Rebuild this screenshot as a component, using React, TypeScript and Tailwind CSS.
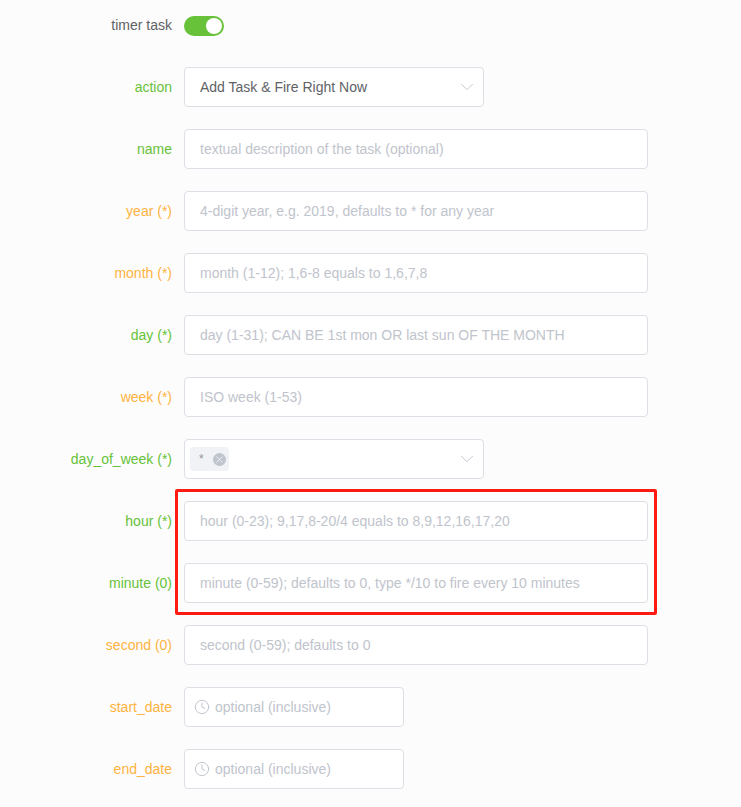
import { ChevronDown, Clock, X } from "lucide-react";
import type { ReactNode } from "react";

const GREEN = "text-[#67c23a]";
const ORANGE = "text-[#ffb340]";

function Row({ label, color, children }: { label: string; color: string; children: ReactNode }) {
  return (
    <div className="flex items-center h-10 mb-[22px]">
      <label className={`w-[172px] pr-0 text-right leading-10 shrink-0 ${color}`}>{label}</label>
      <div className="ml-3 flex items-center">{children}</div>
    </div>
  );
}

function TextInput({ placeholder }: { placeholder: string }) {
  return (
    <input
      readOnly
      placeholder={placeholder}
      className="w-[464px] h-10 px-[15px] bg-white border border-[#dcdfe6] rounded text-sm outline-none placeholder:text-[#c0c4cc]"
    />
  );
}

function DateInput() {
  return (
    <div className="w-[220px] h-10 flex items-center pl-[9px] bg-white border border-[#dcdfe6] rounded">
      <Clock size={16} strokeWidth={1.5} className="text-[#c0c4cc]" />
      <span className="ml-[5px] text-[#c0c4cc]">optional (inclusive)</span>
    </div>
  );
}

export default function App() {
  return (
    <div className="relative w-[741px] h-[807px] overflow-hidden bg-[#fcfcfc] pt-[5px] text-sm font-['Liberation_Sans',Arial,sans-serif]">
      <Row label="timer task" color="text-[#606266]">
        <div className="mt-0.5 w-10 h-5 rounded-full bg-[#67c23a] flex items-center justify-end pr-0.5">
          <div className="w-4 h-4 rounded-full bg-white" />
        </div>
      </Row>

      <Row label="action" color={GREEN}>
        <div className="w-[300px] h-10 flex items-center justify-between pl-[15px] pr-[5px] bg-white border border-[#dcdfe6] rounded text-[#606266]">
          <span>Add Task &amp; Fire Right Now</span>
          <ChevronDown size={22} strokeWidth={1} className="text-[#c0c4cc]" />
        </div>
      </Row>
      <Row label="name" color={GREEN}>
        <TextInput placeholder="textual description of the task (optional)" />
      </Row>
      <Row label="year (*)" color={ORANGE}>
        <TextInput placeholder="4-digit year, e.g. 2019, defaults to * for any year" />
      </Row>
      <Row label="month (*)" color={ORANGE}>
        <TextInput placeholder="month (1-12); 1,6-8 equals to 1,6,7,8" />
      </Row>
      <Row label="day (*)" color={GREEN}>
        <TextInput placeholder="day (1-31); CAN BE 1st mon OR last sun OF THE MONTH" />
      </Row>
      <Row label="week (*)" color={ORANGE}>
        <TextInput placeholder="ISO week (1-53)" />
      </Row>
      <Row label="day_of_week (*)" color={GREEN}>
        <div className="w-[300px] h-10 flex items-center justify-between pl-[5px] pr-[5px] bg-white border border-[#dcdfe6] rounded">
          <div className="h-6 w-[39px] flex items-center bg-[#f0f2f5] rounded pl-[9px] text-xs text-[#909399]">
            <span>*</span>
            <span className="ml-[9px] w-[13px] h-[13px] rounded-full bg-[#c0c4cc] flex items-center justify-center">
              <X size={11} strokeWidth={2} className="text-[#f0f2f5]" />
            </span>
          </div>
          <ChevronDown size={22} strokeWidth={1} className="text-[#c0c4cc]" />
        </div>
      </Row>
      <Row label="hour (*)" color={GREEN}>
        <TextInput placeholder="hour (0-23); 9,17,8-20/4 equals to 8,9,12,16,17,20" />
      </Row>
      <Row label="minute (0)" color={GREEN}>
        <TextInput placeholder="minute (0-59); defaults to 0, type */10 to fire every 10 minutes" />
      </Row>
      <Row label="second (0)" color={ORANGE}>
        <TextInput placeholder="second (0-59); defaults to 0" />
      </Row>
      <Row label="start_date" color={ORANGE}>
        <DateInput />
      </Row>
      <Row label="end_date" color={ORANGE}>
        <DateInput />
      </Row>

      {/* red annotation box over hour + minute */}
      <div className="absolute left-[175px] top-[489px] w-[482px] h-[126px] border-[3px] border-[#ff1a12] rounded-[2px] pointer-events-none" />
    </div>
  );
}
